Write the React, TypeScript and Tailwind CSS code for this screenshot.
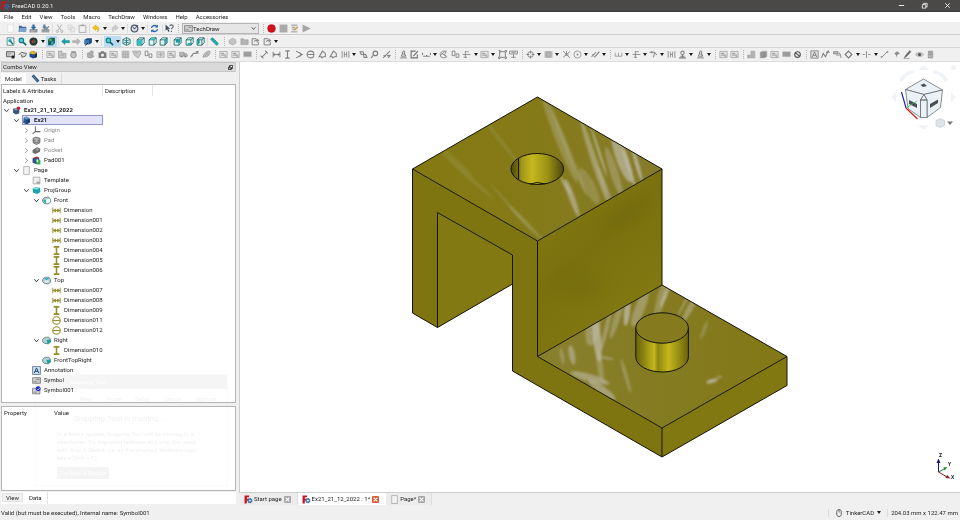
import React from "react";

type Glyph = React.ReactNode;

const cubeBase = (
  <>
    <path d="M2 5 L6 1.5 H14.5 V10 L10.5 14.5 H2 Z" fill="#e9f7f7" stroke="#0b5a5c" strokeWidth="1.4" />
    <path d="M2 5 H10.5 V14.5 M10.5 5 L14.5 1.5" fill="none" stroke="#0b5a5c" strokeWidth="1.4" />
  </>
);
const treeCube = (
  <path d="M1 6 L5 2.5 L12 2 L15 6 V11 L11 14 L4 13 L1 10 Z" fill="#b9cdcf" stroke="#3f6669" strokeWidth="1.2" />
);
const folderPath = "M1.5 3 H6 L7.5 5 H14.5 V13.5 H1.5 Z";

const glyphs: Record<string, Glyph> = {
  // file and edit
  newDoc: <path d="M3 1.5 H13 V14.5 H3 Z" fill="#fbfbfb" stroke="#d9d9d9" />,
  open: (
    <>
      <path d={folderPath} fill="#46698e" />
      <path d="M0.5 14 L3 7 H15.5 L14 14 Z" fill="#7da4cc" />
    </>
  ),
  save: (
    <>
      <path d="M1 9 H15 V15 H1 Z" fill="#8d9499" />
      <path d="M6 1 H10 V5 H13 L8 10.5 L3 5 H6 Z" fill="#2e67a5" />
      <path d="M3 12.5 H10" stroke="#e8e8e8" />
    </>
  ),
  saveAs: (
    <>
      <path d="M1 9 H15 V15 H1 Z" fill="#9a9fa3" />
      <path d="M4 1 H8 V5 H11 L6.5 10 L2 5 H4 Z" fill="#5581b1" />
      <path d="M9 10 L14 4" stroke="#6f6f6f" strokeWidth="2" />
    </>
  ),
  cut: (
    <g fill="none" stroke="#a9a9a9" strokeWidth="1.5">
      <path d="M4 1 L10.5 11 M12 1 L5.5 11" />
      <circle cx="4" cy="13" r="2" />
      <circle cx="12" cy="13" r="2" />
    </g>
  ),
  copy: <path d="M2 2 H9 V10 H2 Z M6 6 H13 V14 H6 Z" fill="#ebebeb" stroke="#c9c9c9" />,
  paste: (
    <>
      <path d="M2 2.5 H14 V15 H2 Z" fill="#f1f1f1" stroke="#a8a8a8" strokeWidth="1.5" />
      <path d="M5 1 H11 V4 H5 Z" fill="#a8a8a8" />
    </>
  ),
  undo: <path d="M1 6.5 L7 1.5 V4.5 C13 4.5 14 9 10 14 C11 9.5 10 8.5 7 8.5 V11.5 Z" fill="#f0c814" stroke="#c39c00" strokeWidth="0.8" />,
  redo: <path d="M15 6.5 L9 1.5 V4.5 C3 4.5 2 9 6 14 C5 9.5 6 8.5 9 8.5 V11.5 Z" fill="#cdcdcd" stroke="#b1b1b1" strokeWidth="0.8" />,
  history: (
    <>
      <circle cx="8" cy="8" r="6" fill="#d6dde5" stroke="#4f5862" strokeWidth="2" />
      <path d="M5 5 L8 9 L14 2" fill="none" stroke="#2c3a4a" strokeWidth="1.5" />
    </>
  ),
  refresh: (
    <g fill="none" stroke="#2a66ad" strokeWidth="2.4">
      <path d="M2.5 7 A5.5 5.5 0 0 1 12 4.5" />
      <path d="M13.5 9 A5.5 5.5 0 0 1 4 11.5" />
      <path d="M14 1 V6 H9 Z M2 15 V10 H7 Z" fill="#2a66ad" stroke="none" />
    </g>
  ),
  whats: (
    <>
      <path d="M1 1 V12 L4 9.5 L6 14 L8 13 L6 9 H9 Z" fill="#3b4a5c" />
      <path d="M8.5 4 C9 0.5 15 1 14.5 4.5 C14 7 11.5 6.5 11.5 9.5 M11.5 12 V14" fill="none" stroke="#5a6673" strokeWidth="2" />
    </>
  ),
  record: <circle cx="8" cy="8" r="7" fill="#d0101a" stroke="#a30009" strokeWidth="0.6" />,
  stop: <path d="M1 1 H15 V15 H1 Z" fill="#aaaaaa" />,
  macros: (
    <>
      <path d="M2 2 H13 V14 H2 Z" fill="#e6e3dc" />
      <path d="M2 2 H13 M2 14 H13 M4 6 H9 M4 9 H7" stroke="#8b8b8b" strokeWidth="1.4" />
      <path d="M7 11 L14 5" stroke="#c8993b" strokeWidth="2.2" />
    </>
  ),
  play: <path d="M1 1 L15.5 8 L1 15 Z" fill="#a5a5a5" />,
  // views
  fitAll: (
    <>
      <path d="M2 1.5 H14 V14.5 H2 Z" fill="#f3ffff" stroke="#4c7376" strokeWidth="1.4" />
      <circle cx="7" cy="6.5" r="3" fill="#15a6aa" />
      <path d="M8 8 L12.5 13" stroke="#0b7377" strokeWidth="2.4" />
    </>
  ),
  zoom: (
    <>
      <circle cx="6" cy="6" r="4" fill="#56c9cc" stroke="#0e8388" strokeWidth="2" />
      <path d="M9 9 L14.5 14.5" stroke="#0b6c70" strokeWidth="3" />
    </>
  ),
  drawStyle: (
    <>
      <circle cx="8" cy="8" r="5.6" fill="#7a2020" stroke="#1f3a35" strokeWidth="3.4" />
      <path d="M8 4 L12 8 L8 12 Z" fill="#137d50" />
      <circle cx="6.5" cy="8" r="2" fill="#c43a3a" />
    </>
  ),
  boundBox: (
    <>
      <path d="M2 4 L6 1.5 H14 V11 L10 14.5 H2 Z" fill="#16585a" />
      <path d="M2 5 L6 2.5 L10 5 L7 8 Z" fill="#5cb548" />
      <path d="M7 9 L12 7 V12 L7 14 Z" fill="#29a9ab" />
    </>
  ),
  back: <path d="M1 8 L7 2.5 V6 H15 V10 H7 V13.5 Z" fill="#14a3a6" stroke="#08777a" strokeWidth="0.7" />,
  fwd: <path d="M15 8 L9 2.5 V6 H1 V10 H9 V13.5 Z" fill="#b6b6b6" stroke="#989898" strokeWidth="0.7" />,
  link: (
    <>
      <path d="M1 5 L5 2 H14 V10 L10 13 H1 Z" fill="#1f4e80" />
      <path d="M1 5 H9 V13 H1 Z" fill="#3a76b5" />
      <path d="M2 15 L7 11" stroke="#1b1b1b" strokeWidth="1.5" />
    </>
  ),
  iso: (
    <path d="M8 1 L14.5 4.5 V11.5 L8 15 L1.5 11.5 V4.5 Z M1.5 4.5 L8 7 L14.5 4.5 M8 1 V15 M1.5 11.5 L8 9 L14.5 11.5" fill="#d9f3f3" stroke="#126467" strokeWidth="1.3" />
  ),
  vFront: <>{cubeBase}<path d="M2.5 5.5 H10 V14 H2.5 Z" fill="#23c3c7" /></>,
  vTop: <>{cubeBase}<path d="M3 4.7 L6.3 2 H13.5 L10.3 4.7 Z" fill="#23c3c7" /></>,
  vRight: <>{cubeBase}<path d="M11 5.3 L14 2.3 V9.7 L11 13 Z" fill="#17a5a9" /></>,
  vRear: <>{cubeBase}<path d="M5 4 H13 V10 H5 Z" fill="#159ba0" /></>,
  vBottom: <>{cubeBase}<path d="M3 13.6 L6 10.5 H13 L10.3 13.6 Z" fill="#17a5a9" /></>,
  vLeft: <>{cubeBase}<path d="M2.5 5 L6.5 3 V11 L2.5 14 Z" fill="#159ba0" /></>,
  measure: (
    <>
      <path d="M1 4 L4 1 L15 12 L12 15 Z" fill="#1fb5b9" stroke="#0a7175" />
      <path d="M5 5 L7 3 M8 8 L10 6 M11 11 L13 9" stroke="#075b5e" />
    </>
  ),
  part: <path d="M2 6 L8 2 L14 5 V11 L8 14 L2 11 Z" fill="#c3c3c3" stroke="#a0a0a0" />,
  folder: <path d={folderPath} fill="#b2b2b2" stroke="#999999" />,
  share: (
    <>
      <path d="M9 3 H2 V14 H13 V9" fill="none" stroke="#808080" strokeWidth="1.7" />
      <path d="M5 10 C5 6 8 5 10 5 V2 L15 6 L10 10 V7 C8 7 6 8 5 10Z" fill="#8e8e8e" />
    </>
  ),
  // drawing pages
  page: (
    <>
      <path d="M1 3 H15 V12 H1 Z" fill="#d6d6d6" stroke="#4b4b4b" strokeWidth="1.5" />
      <path d="M3 6 H9 M3 9 H7" stroke="#777777" />
      <path d="M10 10 H15 V15 H10 Z" fill="#1e1e1e" />
    </>
  ),
  redraw: <path d="M1 9 L6 4 L15 6 L13 11 L7 13 L6 8" fill="#d6d6d6" stroke="#5a5a5a" strokeWidth="1.5" />,
  printAll: (
    <>
      <path d="M1 5 L7 2 L14 4 V13 L7 15 L1 12 Z" fill="#1d4a94" />
      <path d="M5 1 L14 5 L9 8 L1 6 Z" fill="#e6b527" />
      <path d="M10 8 L14 6 V12 L10 14 Z" fill="#2d2d2d" />
    </>
  ),
  gView: (
    <>
      <path d="M1.5 2.5 H14.5 V13.5 H1.5 Z" fill="#e3e3e3" stroke="#a0a0a0" strokeWidth="1.3" />
      <path d="M4 6 H9 M4 9 H12 M10 11 H13" stroke="#8e8e8e" strokeWidth="1.6" />
    </>
  ),
  gStack: <path d="M1 2 H7 V6 H14 V14 H1 Z M4 9 H11" fill="#c9c9c9" stroke="#9b9b9b" strokeWidth="1.3" />,
  gBall: (
    <>
      <path d="M4 2 H12 V6 H4 Z" fill="#9f9f9f" />
      <circle cx="8" cy="9" r="5" fill="#c6c6c6" stroke="#8c8c8c" strokeWidth="1.5" />
    </>
  ),
  gBlob: <path d="M2 6 L7 4 L9 1 L13 3 L12 8 L14 12 L8 14 L3 13 Z M6 7 L10 10" fill="#b0b0b0" stroke="#898989" />,
  camera: (
    <>
      <path d="M1 4.5 H4 L5.5 2 H10.5 L12 4.5 H15 V14 H1 Z" fill="#7d7d7d" />
      <circle cx="8" cy="9" r="3" fill="#e8e8e8" />
    </>
  ),
  mesh: <path d="M2 2 H14 V14 H2 Z M5 2 V14 M8 2 V14 M11 2 V14 M2 5 H14 M2 8 H14 M2 11 H14" fill="#dddddd" stroke="#979797" />,
  shield: <path d="M1 2 H15 V7 L11 14 L5 10 Z M5 5 H11" fill="#cccccc" stroke="#999999" strokeWidth="1.3" />,
  gArrow: <path d="M1.5 3 H14.5 V13 H1.5 Z M4 8 H9 M8 5 L12 8 L8 11 Z" fill="#d8d8d8" stroke="#949494" />,
  truck: (
    <>
      <path d="M1 4 H9 V11 H1 Z M9 6 H13 L15 9 V11 H9 Z" fill="#b7b7b7" stroke="#909090" />
      <path d="M3 12 H6 M10 12 H13" stroke="#666666" strokeWidth="2" />
    </>
  ),
  nodes: <path d="M1 13 L6 6 M6 6 H11 L15 2 M2 10 H5 M10 3 H14 V7" fill="none" stroke="#858585" strokeWidth="1.8" />,
  leaf: <path d="M2 13 C2 7 8 1 14 2 C15 8 10 13 5 12 M2 14 L10 6" fill="#bdbdbd" stroke="#888888" />,
  // dimensions
  dLen: <path d="M3 13 L12 4 M1 10 L6 15 M9 1 L14 6" fill="none" stroke="#7f7f7f" strokeWidth="1.8" />,
  dHor: <path d="M2 3 V13 M14 3 V13 M2 8 H14 M2 8 L5 6.5 V9.5 Z M14 8 L11 6.5 V9.5 Z" fill="none" stroke="#7f7f7f" strokeWidth="1.7" />,
  dVer: <path d="M4 1.5 H12 M4 14.5 H12 M8 2 V14" fill="none" stroke="#7f7f7f" strokeWidth="2" />,
  dAng: <path d="M2 2 L13 8 L2 14 M8 4 C11 7 11 9 8 12" fill="none" stroke="#7f7f7f" strokeWidth="1.8" />,
  dDia: (
    <g fill="none" stroke="#7f7f7f" strokeWidth="1.8">
      <circle cx="8" cy="8" r="6" />
      <path d="M2 8 H14" />
    </g>
  ),
  dBell: <path d="M2 12 L8 2 L13 6 V12 H9 L7 14 L6 12 Z" fill="none" stroke="#7f7f7f" strokeWidth="1.8" />,
  dExt: <path d="M2 2 V14 M14 2 V14 M6 3 V13 M10 3 V13 M6 8 H10" fill="none" stroke="#858585" strokeWidth="1.5" />,
  chain: (
    <g fill="none" stroke="#858585" strokeWidth="2">
      <path d="M2 3 H7 L9 8 H4 Z" />
      <path d="M8 8 H12 L14 13 H9 Z" />
    </g>
  ),
  lens: (
    <g fill="none" stroke="#7f7f7f" strokeWidth="2">
      <circle cx="9.5" cy="6" r="4" />
      <path d="M6 9 L2 14" />
    </g>
  ),
  mark: <path d="M2 14 L14 2 M3 9 L6 12 M9 10 H14 L11 14" fill="none" stroke="#7f7f7f" strokeWidth="1.8" />,
  stamp: <path d="M2 14 H14 M4 11 H12 L10 7 V2 H7 L6 7 Z M5 5 L12 10" fill="none" stroke="#787878" strokeWidth="1.6" />,
  edit: <path d="M13 8 V14 H2 V2 H10 M6 11 L14 2" fill="none" stroke="#707070" strokeWidth="2" />,
  dots: <path d="M1 5 V9 M15 5 V9 M2 11 H14 M8 9 V10" fill="none" stroke="#7f7f7f" strokeWidth="1.8" />,
  hatch: <path d="M2 6 L6 2 H13 L10 8 L14 12 L8 14 L3 12 Z M4 5 L12 11 M3 9 L10 3" fill="none" stroke="#858585" strokeWidth="1.6" />,
  boxes: <path d="M2 2 H7 V10 H2 Z M9 7 H14 V13 H9 Z" fill="none" stroke="#858585" strokeWidth="1.6" />,
  tee: <path d="M1 8 H15 M5 3 H12 M6 3 V14 M3 13 H9" fill="none" stroke="#858585" strokeWidth="1.5" />,
  frame: <path d="M3 3 H13 V13 H3 Z M1 1 H4 V4 M12 1 H15 V4 M1 12 V15 H4 M12 15 H15 V12" fill="none" stroke="#707070" strokeWidth="1.5" />,
  weld: <path d="M1 2 H15 V7 H1 Z M8 7 V14 M4 13 H12 M4 4 H12" fill="none" stroke="#888888" strokeWidth="1.6" />,
  target: (
    <g fill="none" stroke="#7f7f7f" strokeWidth="1.6">
      <circle cx="8" cy="8" r="5" />
      <path d="M8 1 V6 M8 10 V15 M1 8 H6 M10 8 H15" />
    </g>
  ),
  bars: <path d="M2 2 V14 M14 2 V14 M4 3 H12 V13 H4 Z" fill="#b3b3b3" stroke="#929292" strokeWidth="1.3" />,
  cross: <path d="M2 2 L14 14 M14 3 L2 13 M8 2 V9 M5 9 H12" fill="none" stroke="#7f7f7f" strokeWidth="1.5" />,
  ring: (
    <g fill="none" stroke="#8e8e8e" strokeWidth="1.4">
      <circle cx="8" cy="8" r="6.3" />
      <path d="M8 6 V10 M6 8 H10" />
    </g>
  ),
  slashes: <path d="M1 12 L9 4 M6 13 L15 3 M2 8 L5 11" fill="none" stroke="#7a7a7a" strokeWidth="1.8" />,
  ticks: <path d="M2 5 V11 M8 5 V11 M14 5 V11 M2 11 H14" fill="none" stroke="#969696" strokeWidth="1.5" />,
  branch: <path d="M1 4 H10 L8 13 M10 4 L14 9 M5 2 V6" fill="none" stroke="#808080" strokeWidth="1.7" />,
  person: <path d="M5 5 A3 3 0 1 1 11 5 A3 3 0 1 1 5 5 M2 14 H14 M4 11 H12 M8 8 V14" fill="none" stroke="#808080" strokeWidth="1.8" />,
  // surfaces and annotations
  stairs: <path d="M1 9 H7 V2 H14 V14 H1 Z" fill="#b4b4b4" stroke="#a0a0a0" />,
  solid: <path d="M2 4 L6 2 H14 V11 L11 14 H2 Z" fill="#929292" stroke="#b5b5b5" />,
  block: <path d="M1 3 H15 V12 H1 Z" fill="#9b9b9b" stroke="#c0c0c0" />,
  ban: (
    <g fill="none" stroke="#555555" strokeWidth="2">
      <circle cx="8" cy="8" r="5" />
      <path d="M4 5 L12 11" />
    </g>
  ),
  boxA: (
    <>
      <path d="M1.5 1.5 H14.5 V14.5 H1.5 Z" fill="#e3e3e3" stroke="#777777" strokeWidth="1.4" />
      <path d="M4 12.5 L8 3.5 L12 12.5 M5.5 9.5 H10.5" fill="none" stroke="#777777" strokeWidth="1.5" />
    </>
  ),
  leader: <path d="M1 14 L4 6 L8 12 L12 3 M12 1 L15 5 M9 4 L14 3" fill="none" stroke="#7a7a7a" strokeWidth="1.8" />,
  rich: <path d="M1 3 H9 V7 H1 Z M10 5 C14 6 14 10 14 14 M6 9 H12" fill="#bbbbbb" stroke="#888888" strokeWidth="1.5" />,
  diamond: <path d="M8 2 L14 8 L8 14 L2 8 Z" fill="none" stroke="#777777" strokeWidth="2" />,
  center: <path d="M1 8 H5 M11 8 H15 M8 2 V14" fill="none" stroke="#858585" strokeWidth="1.6" />,
  line: <path d="M2 14 L14 2 M1 12 H4 M12 4 H15" fill="none" stroke="#858585" strokeWidth="1.7" />,
  cosm: <path d="M4 6 L9 2 L14 6 L9 9 V14 L7 9 Z" fill="#8b8b8b" />,
  pen: <path d="M2 14 L5 9 L12 1 L14 3 L7 11 Z M1 15 H12" fill="#5e5e5e" stroke="#777777" />,
  eye: (
    <>
      <path d="M0.5 8 C4 3 12 3 15.5 8 C12 13 4 13 0.5 8 Z" fill="#c9c9c9" stroke="#999999" />
      <circle cx="8" cy="8" r="2.8" fill="#555555" />
    </>
  ),
  tag: <path d="M4 2 H12 V4 H4 Z M4 5 H12 V14 H4 Z M5 8 H11" fill="#b4b4b4" stroke="#858585" />,
  // tree
  tDoc: (
    <>
      <path d="M2 5 L8 3 L13 6 V13 L7 15 L2 12 Z" fill="#34547f" />
      <path d="M2 5 L8 3 L13 6 L7 8 Z" fill="#86a5c8" />
      <circle cx="11.5" cy="4" r="3.2" fill="#c5222d" />
    </>
  ),
  tBody: (
    <>
      <path d="M3 3 L8 1 L14 5 V11 L8 15 L2 12 Z" fill="#2a5a95" />
      <path d="M3 3 L8 1 L12 4 L7 6 Z" fill="#6fa0d4" />
      <path d="M8 8 L14 5 V11 L8 15 Z" fill="#183f70" />
    </>
  ),
  tOrigin: <path d="M6 1 V10 H15 M6 10 L1 14" fill="none" stroke="#666666" strokeWidth="1.8" />,
  tPad: <path d="M2 4 L7 2 L14 4 V12 L8 15 L2 12 Z M2 7 L8 9 L14 7 M2 10 L8 12 L14 10" fill="#b0b0b0" stroke="#606060" strokeWidth="1.5" />,
  tPocket: (
    <>
      <path d="M1 7 L9 2 L15 5 L14 10 L6 14 L1 12 Z" fill="#6c6c6c" />
      <path d="M7 5 L11 4 L12 7 L8 9 Z" fill="#a4a4a4" />
    </>
  ),
  tPad1: (
    <>
      <path d="M1 4 L7 2 L13 4 V12 L7 14 L1 12 Z" fill="#2f5183" />
      <path d="M2 3 L9 1 L13 3 L7 5 Z" fill="#a8343c" />
      <path d="M8 7 H15 V15 H8 Z" fill="#2fb14a" />
      <path d="M8 6 H11 V11 H8 Z" fill="#dff3e3" />
    </>
  ),
  tPage: <path d="M3 1 H13 V15 H3 Z" fill="#f3f3f3" stroke="#9b9b9b" strokeWidth="1.2" />,
  tTemplate: (
    <>
      <path d="M2 2 H14 V14 H2 Z" fill="#eeeeee" stroke="#9a9a9a" strokeWidth="1.3" />
      <path d="M8 10 H14 V14 H8 Z" fill="#a6a6a6" />
    </>
  ),
  tGroup: (
    <>
      <path d="M1 5 L6 2 L14 3 L15 10 L10 14 L2 12 Z" fill="#1ba4a8" />
      <path d="M1 5 L6 2 L14 3 L9 6.5 Z" fill="#74dee0" />
    </>
  ),
  tFront: <>{treeCube}<path d="M7 6 L14 5 V11 L8 13 Z" fill="#e8ffff" /><path d="M3 6 L7 7 V12 L3 11 Z" fill="#27aeb2" /></>,
  tTop: <>{treeCube}<path d="M3 5 L8 3 L13 5 L8 7 Z" fill="#24bbbf" /><path d="M5 8 H12 V12 H5 Z" fill="#e3e9ea" /></>,
  tRight: <>{treeCube}<path d="M8 7 L15 6 V11 L10 14 Z" fill="#11a4a8" /></>,
  tHor: <path d="M1.5 3 V13 M14.5 3 V13 M2 8 H14 M3 8 L6 6 V10 Z M13 8 L10 6 V10 Z" fill="#968e2d" stroke="#968e2d" strokeWidth="1.8" />,
  tVer: <path d="M3 1.5 H13 M3 14.5 H13 M8 2 V14" fill="none" stroke="#968e2d" strokeWidth="2.8" />,
  tDia: (
    <g fill="none" stroke="#968e2d" strokeWidth="2">
      <circle cx="8" cy="8" r="6.7" />
      <path d="M2 8 H14" />
    </g>
  ),
  tAnno: (
    <>
      <path d="M1 1 H15 V15 H1 Z" fill="#cbdcf0" stroke="#64809f" strokeWidth="1.6" />
      <path d="M4 12.5 L8 3.5 L12 12.5 M5.5 9.5 H10.5" fill="none" stroke="#22436c" strokeWidth="1.7" />
    </>
  ),
  tSym: <path d="M1 3 H15 V13 H1 Z M3 10 H8 M8 6 H13" fill="#d0d0d0" stroke="#808080" strokeWidth="1.5" />,
  tSym1: (
    <>
      <path d="M1 4 H14 V14 H1 Z M3 11 H8" fill="#d0d0d0" stroke="#808080" strokeWidth="1.5" />
      <circle cx="11" cy="5" r="4.4" fill="#1a26d4" />
      <path d="M9 5 L11 7 L14 3" fill="none" stroke="#ffffff" strokeWidth="1.3" />
    </>
  ),
  tasks: (
    <>
      <path d="M1 4 L5 1 L15 12 L11 15 Z" fill="#274f7d" />
      <path d="M4 4 L11 12" stroke="#7fa8d1" strokeWidth="1.5" />
    </>
  ),
  logo: (
    <>
      <path d="M1 1 H9 V4 H5 V6.5 H8 V9.5 H5 V15 H1 Z" fill="#c8141e" />
      <circle cx="10.5" cy="10" r="3.3" fill="none" stroke="#3567a8" strokeWidth="2.6" strokeDasharray="2 0.7" />
      <circle cx="10.5" cy="10" r="2.6" fill="none" stroke="#3567a8" strokeWidth="1.4" />
    </>
  ),
  mouse: <path d="M8 1 C11 1 12.5 3 12.5 5 V11 C12.5 13 11 15 8 15 C5 15 3.5 13 3.5 11 V5 C3.5 3 5 1 8 1 Z M8 2 V7" fill="none" stroke="#3b3b3b" strokeWidth="1.5" />,
};

function Icon({ name, className = "h-[9px] w-[9px]" }: { name: string; className?: string }) {
  return (
    <svg viewBox="0 0 16 16" className={`block shrink-0 ${className}`} aria-hidden="true">
      {glyphs[name]}
    </svg>
  );
}

function Caret() {
  return (
    <svg viewBox="0 0 8 6" className="block h-[3px] w-[4px] shrink-0" aria-hidden="true">
      <path d="M0 0 H8 L4 6 Z" fill="#1a1a1a" />
    </svg>
  );
}

/** A run of tool buttons; a "v" entry is the drop-down arrow of the button before it. */
function Tools({ items, width, active }: { items: string; width: string; active?: string }) {
  return (
    <div className={`flex shrink-0 items-center justify-between ${width}`}>
      {items.split(" ").map((n, i) =>
        n === "v" ? (
          <Caret key={i} />
        ) : (
          <button key={i} type="button" aria-label={n} className={n === active ? "bg-[#bcdcf4] outline-1 outline-[#bcdcf4]" : ""}>
            <Icon name={n} />
          </button>
        ),
      )}
    </div>
  );
}

const Handle = () => (
  <div className="flex w-[8px] shrink-0 items-center justify-center self-stretch">
    <div className="h-[9px] border-l border-dotted border-[#b5b5b5]" />
  </div>
);
const Split = () => <div className="mx-[2px] h-[9px] w-px shrink-0 bg-[#dcdcdc]" />;

type Row = { d: number; icon: string; text: string; arrow?: "open" | "closed"; look?: "bold" | "dim" | "selected" };

const rows: Row[] = [
  { d: 0, icon: "tDoc", text: "Ex21_21_12_2022", arrow: "open", look: "bold" },
  { d: 1, icon: "tBody", text: "Ex21", arrow: "open", look: "selected" },
  { d: 2, icon: "tOrigin", text: "Origin", arrow: "closed", look: "dim" },
  { d: 2, icon: "tPad", text: "Pad", arrow: "closed", look: "dim" },
  { d: 2, icon: "tPocket", text: "Pocket", arrow: "closed", look: "dim" },
  { d: 2, icon: "tPad1", text: "Pad001", arrow: "closed" },
  { d: 1, icon: "tPage", text: "Page", arrow: "open" },
  { d: 2, icon: "tTemplate", text: "Template" },
  { d: 2, icon: "tGroup", text: "ProjGroup", arrow: "open" },
  { d: 3, icon: "tFront", text: "Front", arrow: "open" },
  { d: 4, icon: "tHor", text: "Dimension" },
  { d: 4, icon: "tHor", text: "Dimension001" },
  { d: 4, icon: "tHor", text: "Dimension002" },
  { d: 4, icon: "tHor", text: "Dimension003" },
  { d: 4, icon: "tVer", text: "Dimension004" },
  { d: 4, icon: "tVer", text: "Dimension005" },
  { d: 4, icon: "tVer", text: "Dimension006" },
  { d: 3, icon: "tTop", text: "Top", arrow: "open" },
  { d: 4, icon: "tHor", text: "Dimension007" },
  { d: 4, icon: "tHor", text: "Dimension008" },
  { d: 4, icon: "tVer", text: "Dimension009" },
  { d: 4, icon: "tDia", text: "Dimension011" },
  { d: 4, icon: "tDia", text: "Dimension012" },
  { d: 3, icon: "tRight", text: "Right", arrow: "open" },
  { d: 4, icon: "tVer", text: "Dimension010" },
  { d: 3, icon: "tRight", text: "FrontTopRight" },
  { d: 2, icon: "tAnno", text: "Annotation" },
  { d: 2, icon: "tSym", text: "Symbol" },
  { d: 2, icon: "tSym1", text: "Symbol001" },
];

const indents = ["pl-0", "pl-[10px]", "pl-[20px]", "pl-[30px]", "pl-[40px]"];
const looks = { bold: "font-bold", dim: "text-[#8a8a8a]", selected: "font-bold" };

function TreeRow({ row }: { row: Row }) {
  return (
    <div role="treeitem" aria-level={row.d + 1} aria-selected={row.look === "selected"} className={`flex h-[10px] items-center ${indents[row.d]}`}>
      <span className="flex w-[10px] justify-center pr-[2px]">
        {row.arrow && (
          <svg viewBox="0 0 8 8" className="h-[5px] w-[5px]" aria-hidden="true">
            <path d={row.arrow === "open" ? "M0.5 2 L4 6 L7.5 2" : "M2 0.5 L6 4 L2 7.5"} fill="none" stroke={row.arrow === "open" ? "#333333" : "#999999"} strokeWidth="1.5" />
          </svg>
        )}
      </span>
      <span className={`flex h-[10px] items-center gap-[3px] ${row.look === "selected" ? "w-[81px] bg-[#e2e3fc] outline-1 -outline-offset-1 outline-[#9294c4]" : ""}`}>
        <Icon name={row.icon} />
        <span className={row.look ? looks[row.look] : ""}>{row.text}</span>
      </span>
    </div>
  );
}

/** Fading notification left over the lower part of the tree. */
function FadingNotice() {
  return (
    <div className="pointer-events-none absolute top-[312px] left-[35px] w-[193px] border border-[#fafafa] pb-[6px] text-[#f0f0f0] mix-blend-multiply">
      <div className="h-[14px] bg-[#f5f5f5] pl-[34px] leading-[14px] text-white">Snipping Tool</div>
      <div className="flex h-[20px] items-center justify-between pr-[10px] pl-[44px]">
        <span>New</span>
        <span>Mode</span>
        <span>Delay</span>
        <span>Cancel</span>
        <span>Options</span>
      </div>
      <div className="pt-[4px] pl-[38px] text-[8px] leading-[12px]">Snipping Tool is moving...</div>
      <div className="pt-[5px] pr-[24px] pl-[21px] leading-[8px]">
        In a future update, Snipping Tool will be moving to a new home. Try improved features and snip like usual with Snip &amp; Sketch (or try the shortcut Windows logo key + Shift + S).
      </div>
      <div className="mt-[5px] ml-[21px] h-[12px] w-[52px] bg-[#f4f4f4] text-center leading-[12px] text-white">Try Snip &amp; Sketch</div>
    </div>
  );
}

function ComboView() {
  return (
    <aside className="relative flex w-[236px] shrink-0 flex-col pb-px pl-px">
      <div className="flex h-[10px] shrink-0 items-center justify-between border border-[#c6c6c6] bg-[#d9d9d9] px-px">
        <span>Combo View</span>
        <button type="button" aria-label="Float" className="pr-px">
          <svg viewBox="0 0 12 12" className="h-[5px] w-[5px]" aria-hidden="true">
            <path d="M4 1 H11 V8 H4 Z M1 5 H8 V11 H1 Z" fill="#ffffff" stroke="#222222" strokeWidth="2" />
          </svg>
        </button>
      </div>
      <div className="flex h-[12px] shrink-0 items-end pt-px">
        <button type="button" className="h-[11px] bg-white px-[4px]">Model</button>
        <button type="button" className="flex h-[11px] items-center gap-px border-r border-[#dddddd] px-[5px]">
          <Icon name="tasks" />
          Tasks
        </button>
      </div>
      <div className="min-h-0 flex-1 overflow-hidden border border-[#b4b4b4] bg-white" role="tree" aria-label="Model">
        <div className="flex h-[11px] items-center">
          <span className="w-[101px] border-r border-[#e4e4e4] pl-px leading-[11px]">Labels &amp; Attributes</span>
          <span className="w-[50px] border-r border-[#e4e4e4] pl-[2px] leading-[11px]">Description</span>
        </div>
        <div className="h-[9px] pl-px leading-[9px]">Application</div>
        {rows.map((r) => (
          <TreeRow key={r.text} row={r} />
        ))}
      </div>
      <div className="mt-[3px] flex h-[85px] shrink-0 border border-[#b4b4b4] bg-white pt-[2px] pl-[2px]">
        <span className="w-[50px]">Property</span>
        <span>Value</span>
      </div>
      <div className="mt-px flex h-[12px] shrink-0 bg-white">
        <button type="button" className="mt-px mb-[2px] ml-px border border-[#e2e2e2] bg-[#f0f0f0] px-[3px]">View</button>
        <button type="button" className="border-r border-[#e2e2e2] px-[6px]">Data</button>
      </div>
      <FadingNotice />
    </aside>
  );
}

/** Soft reflections, each [centre x, centre y, half length, half width, angle, opacity]. */
const topGlints = [
  [560, 140, 46, 4, 68, 0.35],
  [568, 150, 50, 2, 68, 0.35],
  [594, 160, 44, 3, 72, 0.55],
  [599, 152, 26, 1, 72, 0.9],
  [605, 186, 22, 2, 70, 0.5],
  [589, 186, 20, 6, 62, 0.3],
  [572, 198, 20, 3, 70, 0.65],
  [566, 186, 10, 2, 60, 0.6],
  [622, 158, 26, 6, 70, 0.7],
  [629, 168, 20, 2, 72, 0.7],
  [637, 164, 18, 2, 74, 0.8],
  [614, 172, 26, 4, 72, 0.4],
  [525, 222, 24, 2, 46, 0.3],
  [510, 206, 30, 1, 48, 0.25],
  [500, 140, 32, 2, 52, 0.16],
  [468, 176, 34, 2, 42, 0.18],
  [455, 160, 24, 2, 42, 0.14],
];
const baseGlints = [
  [660, 302, 22, 4, 104, 0.4],
  [665, 296, 12, 2, 112, 0.7],
  [640, 308, 20, 5, 112, 0.5],
  [627, 312, 14, 3, 96, 0.8],
  [617, 318, 22, 3, 108, 0.45],
  [597, 338, 24, 4, 84, 0.75],
  [593, 328, 18, 7, 100, 0.45],
  [606, 330, 22, 2, 104, 0.5],
  [572, 355, 10, 3, 80, 0.6],
  [562, 356, 8, 2, 80, 0.4],
  [590, 378, 20, 4, 16, 0.6],
  [602, 390, 16, 4, 35, 0.6],
  [600, 366, 16, 3, 82, 0.4],
  [626, 376, 18, 2, 74, 0.4],
  [606, 358, 8, 1, 10, 0.6],
  [690, 308, 16, 3, 118, 0.5],
  [684, 304, 14, 1, 118, 0.6],
  [704, 330, 10, 2, 110, 0.3],
  [712, 381, 6, 2, -15, 0.8],
  [719, 377, 3, 1, -10, 0.6],
];

function Glints({ list }: { list: number[][] }) {
  return (
    <g filter="url(#soft)" fill="#bdb9a6">
      {list.map(([x, y, l, w, a, o], i) => (
        <ellipse key={i} cx={x} cy={y} rx={l} ry={w} opacity={o} transform={`rotate(${a} ${x} ${y})`} />
      ))}
    </g>
  );
}

function Scene() {
  return (
    <svg viewBox="240 62 720 430" preserveAspectRatio="xMidYMid meet" className="block h-full w-full" role="img" aria-label="3D view of the bracket">
      <defs>
        <linearGradient id="top" x1="0" x2="1">
          <stop offset="0" stopColor="#847911" />
          <stop offset="0.5" stopColor="#857a18" />
          <stop offset="1" stopColor="#857c2c" />
        </linearGradient>
        <linearGradient id="side" x1="0" y1="0" x2="0.6" y2="1">
          <stop offset="0" stopColor="#857b14" />
          <stop offset="0.5" stopColor="#7a700e" />
          <stop offset="1" stopColor="#857b12" />
        </linearGradient>
        <linearGradient id="base" x1="0" x2="1">
          <stop offset="0" stopColor="#89802f" />
          <stop offset="0.45" stopColor="#857b22" />
          <stop offset="1" stopColor="#827816" />
        </linearGradient>
        <linearGradient id="pin" x1="0" x2="1">
          <stop offset="0" stopColor="#6a620c" />
          <stop offset="0.15" stopColor="#8c8313" />
          <stop offset="0.35" stopColor="#c4b81a" />
          <stop offset="0.42" stopColor="#8d8514" />
          <stop offset="0.62" stopColor="#c4b81a" />
          <stop offset="0.8" stopColor="#9b9115" />
          <stop offset="1" stopColor="#6a610d" />
        </linearGradient>
        <linearGradient id="bore" x1="0" x2="1">
          <stop offset="0" stopColor="#4f490b" />
          <stop offset="0.15" stopColor="#7a7212" />
          <stop offset="0.2" stopColor="#a1971a" />
          <stop offset="0.4" stopColor="#c4b81c" />
          <stop offset="0.7" stopColor="#9b9116" />
          <stop offset="1" stopColor="#4d470b" />
        </linearGradient>
        <clipPath id="topClip"><path d="M412.5 169 L537.5 97 L662 169 L537.5 241 Z" /></clipPath>
        <clipPath id="baseClip"><path d="M537.5 356.5 L662 285 L787 356.5 L662 428 Z" /></clipPath>
        <filter id="soft" x="-20%" y="-20%" width="140%" height="140%"><feGaussianBlur stdDeviation="1.2" /></filter>
        <filter id="softer" x="-50%" y="-50%" width="200%" height="200%"><feGaussianBlur stdDeviation="7" /></filter>
      </defs>

      {/* bracket faces */}
      <path d="M437.5 212.5 L512.5 255 V284 L437.5 327.5 Z" fill="#837912" />
      <path d="M412.5 169 L537.5 97 L662 169 L537.5 241 Z" fill="url(#top)" />
      <path d="M537.5 241 L662 169 V285 L537.5 356.5 Z" fill="url(#side)" />
      <path d="M537.5 356.5 L662 285 L787 356.5 L662 428 Z" fill="url(#base)" />
      <path d="M412.5 169 L537.5 241 V356.5 L662 428 V457 L512.5 371 V255 L437.5 212.5 V327.5 L412.5 313 Z" fill="#7f7510" />
      <path d="M662 428 L787 356.5 V385.5 L662 457 Z" fill="#827811" />
      <ellipse cx="625" cy="215" rx="24" ry="8" fill="#665e0c" opacity="0.25" filter="url(#softer)" transform="rotate(-25 625 215)" />
      <ellipse cx="580" cy="285" rx="22" ry="12" fill="#665e0c" opacity="0.2" filter="url(#softer)" />

      {/* reflections */}
      <g clipPath="url(#topClip)"><Glints list={topGlints} /></g>
      <g clipPath="url(#baseClip)"><Glints list={baseGlints} /></g>

      {/* hole and pin */}
      <ellipse cx="537.3" cy="169" rx="26.3" ry="15.5" fill="url(#bore)" stroke="#141305" />
      <path d="M518.5 158.5 V179.5 M530 184 Q537 181 545 184" fill="none" stroke="#141305" />
      <path d="M635.8 328 V357 A26.3 15 0 0 0 688.4 357 V328 Z" fill="url(#pin)" stroke="#141305" />
      <ellipse cx="662.1" cy="328" rx="26.3" ry="15.2" fill="#857b1e" stroke="#141305" />

      {/* edges */}
      <g fill="none" stroke="#141305" strokeWidth="1" strokeLinejoin="round">
        <path d="M412.5 169 L537.5 97 L662 169 L537.5 241 Z" />
        <path d="M412.5 169 V313 L437.5 327.5 V212.5 L512.5 255 V371 L662 457 L787 385.5 V356.5 L662 285 V169" />
        <path d="M537.5 241 V356.5 L662 428 L787 356.5 M662 428 V457 M537.5 356.5 L662 285 M437.5 327.5 L512.5 284" />
      </g>

      {/* navigation cube */}
      <g fill="#eff3f8">
        <path d="M923.5 65 L929 70 H918 Z M923.5 130 L929 125 H918 Z M891 97 L896 92 V102 Z M956 97 L951 92 V102 Z" />
        <path d="M899 80 Q904 71 914 70 V73 Q906 74 902 82 Z M948 80 Q943 71 933 70 V73 Q941 74 945 82 Z" />
        <circle cx="953.5" cy="67.5" r="2.5" />
      </g>
      <g fill="#eaf1f7" stroke="#5a5f63" strokeWidth="0.7" strokeLinejoin="round">
        <path d="M905.5 89.5 L923.5 79 L942.5 90 L924 94.5 Z" />
        <path d="M905.5 89.5 L924 94.5 L920.5 100 V117.5 L908 108.5 Z" />
        <path d="M942.5 90 L924 94.5 L927 100 V117.5 L940.5 107.5 Z" />
        <path d="M924 94.5 L927 100 H920.5 Z M920.5 100 V117.5 H927 V100 Z" />
      </g>
      <path d="M909 100 L917 104 V108 L909 104 Z M930 104 L938 99.5 V103 L930 108 Z M920.5 85 L924 83.5 L927 86 L923 87 Z" fill="#4a4f53" />
      <g fill="none" strokeWidth="1.2">
        <path d="M901.5 92 L906 108" stroke="#2323c4" />
        <path d="M906 108 L917.5 119" stroke="#cc1f1f" />
        <path d="M906 108 L917 101" stroke="#2ec244" strokeWidth="0.7" />
      </g>
      <path d="M936 120.5 L940 118.5 L944.5 120.5 V125.5 L940 127.5 L936 125.5 Z" fill="#dfe4e8" stroke="#c4c9cd" strokeWidth="0.7" />
      <path d="M947 121.5 H953 L950 125 Z" fill="#777777" />

      {/* axis cross */}
      <g fill="none" strokeWidth="1">
        <path d="M938.5 472 V461" stroke="#16168a" />
        <path d="M938.5 472 L945 468.5" stroke="#178a25" />
        <path d="M938.5 472 L947 477" stroke="#8a1616" />
      </g>
      <path d="M938.5 458.5 L940.5 463 H936.5 Z" fill="#16168a" />
      <path d="M947.5 467 L944.5 470.5 L943.5 467.5 Z" fill="#178a25" />
      <path d="M950.5 478.5 L945.5 478 L947 475 Z" fill="#8a1616" />
      <g fontSize="5" fontWeight="700" fill="#222222">
        <text x="939" y="457">Z</text>
        <text x="948" y="466">Y</text>
        <text x="951" y="479">X</text>
      </g>
    </svg>
  );
}

function DocTab({ icon, label, active }: { icon: string; label: string; active?: boolean }) {
  return (
    <div className={`flex h-[12px] items-center gap-px pl-[4px] ${active ? "bg-white pr-[7px]" : "border-r border-[#dddddd] bg-[#ececec] pr-[6px]"}`}>
      <Icon name={icon} />
      <button type="button">{label}</button>
      <button
        type="button"
        aria-label={`Close ${label}`}
        className={`ml-px flex h-[7px] w-[7px] items-center justify-center rounded-[1px] ${active ? "bg-[#dd5a35]" : "bg-[#a6a6a6]"}`}
      >
        <svg viewBox="0 0 8 8" className="h-[5px] w-[5px]" aria-hidden="true">
          <path d="M1 1 L7 7 M7 1 L1 7" stroke="#ffffff" strokeWidth="1.7" />
        </svg>
      </button>
    </div>
  );
}

const menus = ["File", "Edit", "View", "Tools", "Macro", "TechDraw", "Windows", "Help", "Accessories"];

export default function App() {
  return (
    <div className="flex h-screen flex-col overflow-hidden bg-[#f0f0f0] font-['Roboto','Liberation_Sans',sans-serif] text-[6px] leading-[8px] text-[#1d1d1d]">
      <header className="flex h-[12px] shrink-0 items-center border-b border-[#3a3a3a] bg-[#4b4947] pl-px text-[#eeeeee]">
        <Icon name="logo" />
        <span className="ml-[2px] flex-1">FreeCAD 0.20.1</span>
        <div className="flex gap-[16px] pr-[9px]">
          <button type="button" aria-label="Minimize">
            <svg viewBox="0 0 8 8" className="h-[7px] w-[7px]"><path d="M1 4 H7" stroke="#ffffff" /></svg>
          </button>
          <button type="button" aria-label="Restore">
            <svg viewBox="0 0 8 8" className="h-[7px] w-[7px]"><path d="M1.5 3 H5.5 V7 H1.5 Z M3 3 V1.5 H7 V5.5 H5.5" fill="none" stroke="#ffffff" strokeWidth="0.9" /></svg>
          </button>
          <button type="button" aria-label="Close">
            <svg viewBox="0 0 8 8" className="h-[7px] w-[7px]"><path d="M1.5 1.5 L6.5 6.5 M6.5 1.5 L1.5 6.5" stroke="#ffffff" /></svg>
          </button>
        </div>
      </header>

      <nav className="flex h-[10px] shrink-0 items-center gap-[8px] bg-white pl-[4px]">
        {menus.map((m) => (
          <button key={m} type="button">{m}</button>
        ))}
      </nav>

      <div className="flex h-[13px] shrink-0 items-center border-b border-[#cfcfcf] pl-[6px]">
        <Tools items="newDoc open save saveAs" width="w-[44px]" />
        <Split />
        <Tools items="cut copy paste" width="w-[32px]" />
        <Split />
        <Tools items="undo v redo v" width="w-[33px]" />
        <Split />
        <Tools items="history v" width="w-[15px]" />
        <Split />
        <Tools items="refresh" width="w-[10px]" />
        <Split />
        <Tools items="whats" width="w-[9px]" />
        <Handle />
        <div className="relative flex w-[77px] items-center border border-[#b5b5b5] bg-[#e6e6e6]">
          <span className="absolute left-px"><Icon name="tSym" /></span>
          <select aria-label="Workbench" defaultValue="TechDraw" className="h-[9px] w-full appearance-none bg-transparent pl-[10px] leading-[9px]">
            <option>TechDraw</option>
          </select>
          <svg viewBox="0 0 8 8" className="absolute right-[2px] h-[5px] w-[5px]" aria-hidden="true">
            <path d="M1 2 L4 5.5 L7 2" fill="none" stroke="#444444" strokeWidth="1.3" />
          </svg>
        </div>
        <Handle />
        <Tools items="record stop macros play" width="w-[44px]" />
      </div>

      <div className="flex h-[13px] shrink-0 items-center border-b border-[#d6d6d6] pl-[6px]">
        <Tools items="fitAll zoom drawStyle v boundBox" width="w-[50px]" active="boundBox" />
        <Split />
        <Tools items="back fwd link v" width="w-[38px]" />
        <Split />
        <div className="flex h-[11px] items-center bg-[#bcdcf4] px-px">
          <Tools items="zoom v" width="w-[15px]" />
        </div>
        <div className="w-px" />
        <Tools items="iso" width="w-[9px]" />
        <Split />
        <Tools items="vFront vTop vRight" width="w-[32px]" />
        <Split />
        <Tools items="vRear vBottom vLeft" width="w-[32px]" />
        <Split />
        <Tools items="measure" width="w-[10px]" />
        <Handle />
        <Tools items="part folder share share v" width="w-[50px]" />
      </div>

      <div className="flex h-[14px] shrink-0 items-center border-b border-[#dddddd] pl-[6px]">
        <Tools items="page redraw printAll" width="w-[32px]" />
        <Handle />
        <Tools items="gView gStack gBall" width="w-[32px]" />
        <Handle />
        <Tools items="gBlob camera gView mesh shield boxes gArrow gView truck nodes leaf" width="w-[125px]" />
        <Handle />
        <Tools items="gView gView block" width="w-[33px]" />
        <Handle />
        <Tools items="dLen dHor dVer dAng dDia dBell dBell dExt v chain lens mark" width="w-[131px]" />
        <Handle />
        <Tools items="stamp edit dots v hatch boxes tee v gView v frame weld" width="w-[119px]" />
        <Handle />
        <Tools items="target v bars v cross ring v slashes v" width="w-[80px]" />
        <Handle />
        <Tools items="ticks v tee v branch v dExt person v stamp v" width="w-[97px]" />
        <Handle />
        <Tools items="gView gView" width="w-[20px]" />
        <Handle />
        <Tools items="stairs solid gView block ban" width="w-[55px]" />
        <Handle />
        <Tools items="boxA leader rich diamond v center v line cosm pen eye tag" width="w-[125px]" />
      </div>

      <main className="flex min-h-0 flex-1">
        <ComboView />
        <section className="ml-[3px] flex min-w-0 flex-1 flex-col">
          <div className="min-h-0 flex-1 border-b border-l border-[#cfcfcf] bg-white">
            <Scene />
          </div>
          <div className="flex shrink-0 pl-px">
            <DocTab icon="logo" label="Start page" />
            <DocTab icon="logo" label="Ex21_21_12_2022 : 1*" active />
            <DocTab icon="tPage" label="Page*" />
          </div>
        </section>
      </main>

      <footer className="flex h-[15px] shrink-0 items-center pr-[2px] pl-px">
        <span className="flex-1">Valid (but must be executed), Internal name: Symbol001</span>
        <button type="button" className="flex items-center gap-[3px] border-l border-[#dcdcdc] pl-[6px]">
          <Icon name="mouse" className="h-[8px] w-[8px]" />
          TinkerCAD
          <Caret />
        </button>
        <span className="ml-[6px] border-l border-[#dcdcdc] pl-[3px]">204.03 mm x 122.47 mm</span>
      </footer>
    </div>
  );
}
